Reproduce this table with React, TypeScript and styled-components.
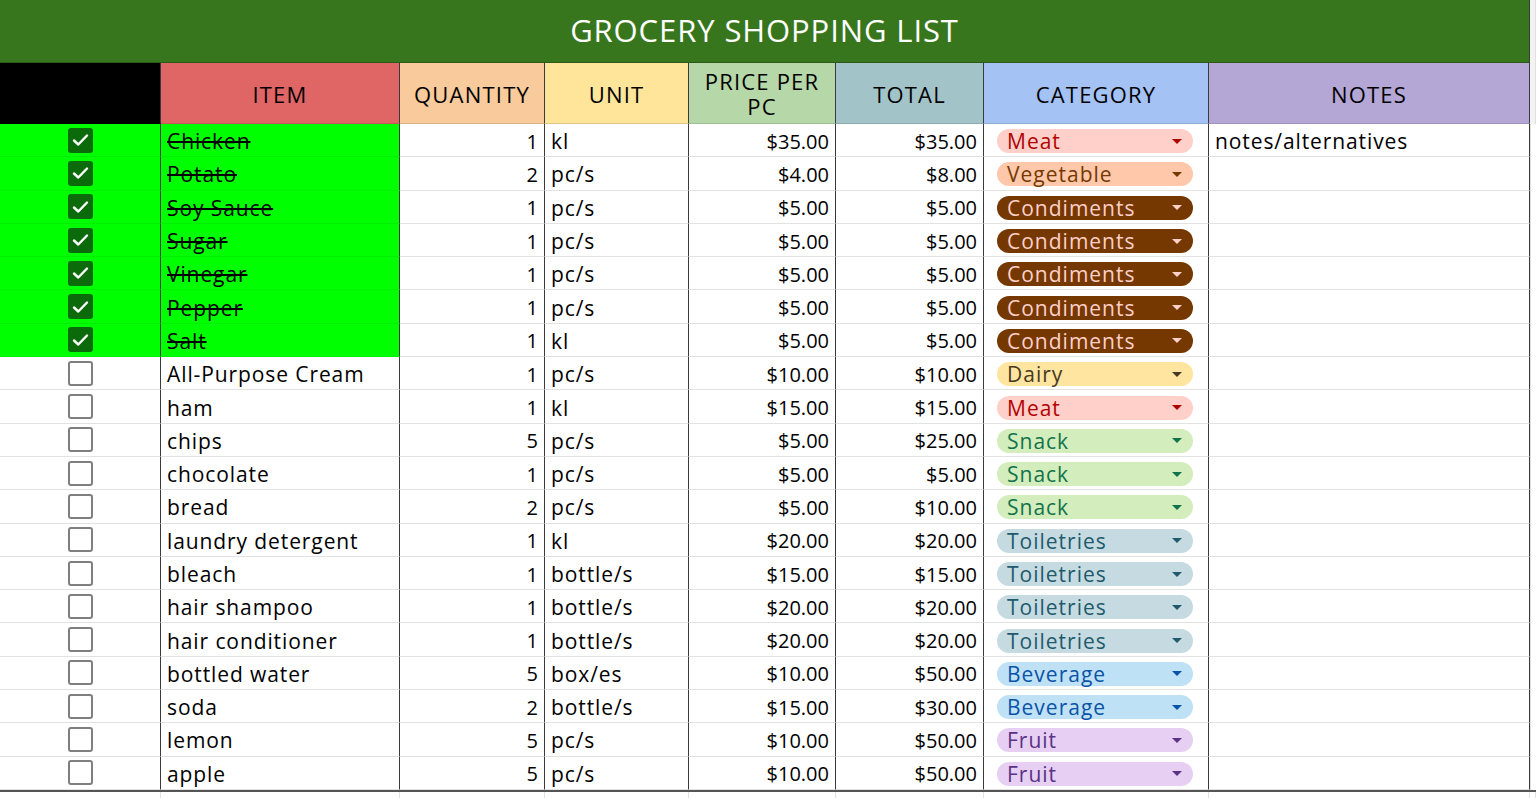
import React from "react";
import styled, { createGlobalStyle } from "styled-components";

const COLS = "161px 239px 145px 144px 147px 148px 225px 321px 6px";
const FONT = `"Open Sans", "Liberation Sans", sans-serif`;

const Global = createGlobalStyle`
  html, body { margin: 0; padding: 0; background: #ffffff; }
  body { font-family: ${FONT}; color: #000; overflow: hidden; }
`;

const Sheet = styled.div`
  width: 1536px;
  height: 798px;
  overflow: hidden;
  background: #fff;
`;

const TitleBar = styled.div`
  display: grid;
  grid-template-columns: 1530px 6px;
  height: 63px;
`;

const Title = styled.div`
  background: #38761d;
  color: #fff;
  font-size: 31px;
  display: flex;
  align-items: center;
  justify-content: center;
  border-right: 1px solid #3a3a3a;
  border-bottom: 1px solid #2d5a18;
  box-sizing: border-box;
  letter-spacing: 0.9px;
  padding-bottom: 3px;
`;

const Gutter = styled.div`
  background: #f3f3f3;
  border-right: 1px solid #e0e0e0;
`;

const HeaderRow = styled.div`
  display: grid;
  grid-template-columns: ${COLS};
  height: 61px;
`;

const HeadCell = styled.div<{ $bg: string }>`
  background: ${(p) => p.$bg};
  display: flex;
  align-items: center;
  justify-content: center;
  text-align: center;
  font-size: 22px;
  line-height: 25px;
  letter-spacing: 1.2px;
  padding-top: 2px;
  box-sizing: border-box;
  border-right: 1px solid #3a3a3a;
  border-bottom: 1px solid rgba(0, 0, 0, 0.12);
`;

const Body = styled.div`
  display: grid;
  grid-template-rows: repeat(20, 33.3px);
  border-bottom: 2px solid #555;
`;

const Row = styled.div`
  display: grid;
  grid-template-columns: ${COLS};
`;

const Cell = styled.div<{ $green?: boolean; $align?: "left" | "right" | "center"; $num?: boolean }>`
  background: ${(p) => (p.$green ? "#00ff00" : "#fff")};
  display: flex;
  align-items: center;
  justify-content: ${(p) =>
    p.$align === "right" ? "flex-end" : p.$align === "center" ? "center" : "flex-start"};
  padding: 2px 6px 0 6px;
  box-sizing: border-box;
  font-size: ${(p) => (p.$num ? "20px" : "21px")};
  letter-spacing: ${(p) => (p.$num ? "0" : "0.9px")};
  white-space: nowrap;
  overflow: hidden;
  border-right: 1px solid #3a3a3a;
  border-bottom: 1px solid ${(p) => (p.$green ? "rgba(0,0,0,0.06)" : "#e2e2e2")};
`;

const ItemText = styled.span<{ $done: boolean }>`
  text-decoration: ${(p) => (p.$done ? "line-through" : "none")};
`;

const GutterCell = styled.div`
  background: #fff;
  border-left: 1px solid #e0e0e0;
`;

const Box = styled.span<{ $on: boolean }>`
  width: 25px;
  height: 25px;
  box-sizing: border-box;
  border-radius: 3px;
  display: flex;
  align-items: center;
  justify-content: center;
  background: ${(p) => (p.$on ? "#0b6b0b" : "#fff")};
  border: ${(p) => (p.$on ? "none" : "2.5px solid #7f7f7f")};
  margin-top: -2px;
`;

const Pill = styled.div<{ $bg: string; $fg: string }>`
  width: 196px;
  height: 24px;
  margin-left: 7px;
  border-radius: 12px;
  background: ${(p) => p.$bg};
  color: ${(p) => p.$fg};
  display: flex;
  align-items: center;
  justify-content: space-between;
  padding: 0 11px 0 10px;
  box-sizing: border-box;
  font-size: 21px;
  letter-spacing: 1px;
`;

const Arrow = styled.span<{ $fg: string }>`
  width: 0;
  height: 0;
  border-left: 5px solid transparent;
  border-right: 5px solid transparent;
  border-top: 5px solid ${(p) => p.$fg};
`;

const Tail = styled.div`
  display: grid;
  grid-template-columns: ${COLS};
  height: 10px;
`;

const TailCell = styled.div`
  border-right: 1px solid #e2e2e2;
`;

type Cat = { bg: string; fg: string };
const CATS: Record<string, Cat> = {
  Meat: { bg: "#ffcfc9", fg: "#b10202" },
  Vegetable: { bg: "#ffc8aa", fg: "#753800" },
  Condiments: { bg: "#753800", fg: "#ffcfc9" },
  Dairy: { bg: "#ffe5a0", fg: "#473821" },
  Snack: { bg: "#d4edbc", fg: "#11734b" },
  Toiletries: { bg: "#c6dbe1", fg: "#215a6c" },
  Beverage: { bg: "#bfe1f6", fg: "#0a53a8" },
  Fruit: { bg: "#e6cff2", fg: "#5a3286" },
};

type Item = [boolean, string, number, string, string, string, string, string?];
const ROWS: Item[] = [
  [true, "Chicken", 1, "kl", "$35.00", "$35.00", "Meat", "notes/alternatives"],
  [true, "Potato", 2, "pc/s", "$4.00", "$8.00", "Vegetable"],
  [true, "Soy Sauce", 1, "pc/s", "$5.00", "$5.00", "Condiments"],
  [true, "Sugar", 1, "pc/s", "$5.00", "$5.00", "Condiments"],
  [true, "Vinegar", 1, "pc/s", "$5.00", "$5.00", "Condiments"],
  [true, "Pepper", 1, "pc/s", "$5.00", "$5.00", "Condiments"],
  [true, "Salt", 1, "kl", "$5.00", "$5.00", "Condiments"],
  [false, "All-Purpose Cream", 1, "pc/s", "$10.00", "$10.00", "Dairy"],
  [false, "ham", 1, "kl", "$15.00", "$15.00", "Meat"],
  [false, "chips", 5, "pc/s", "$5.00", "$25.00", "Snack"],
  [false, "chocolate", 1, "pc/s", "$5.00", "$5.00", "Snack"],
  [false, "bread", 2, "pc/s", "$5.00", "$10.00", "Snack"],
  [false, "laundry detergent", 1, "kl", "$20.00", "$20.00", "Toiletries"],
  [false, "bleach", 1, "bottle/s", "$15.00", "$15.00", "Toiletries"],
  [false, "hair shampoo", 1, "bottle/s", "$20.00", "$20.00", "Toiletries"],
  [false, "hair conditioner", 1, "bottle/s", "$20.00", "$20.00", "Toiletries"],
  [false, "bottled water", 5, "box/es", "$10.00", "$50.00", "Beverage"],
  [false, "soda", 2, "bottle/s", "$15.00", "$30.00", "Beverage"],
  [false, "lemon", 5, "pc/s", "$10.00", "$50.00", "Fruit"],
  [false, "apple", 5, "pc/s", "$10.00", "$50.00", "Fruit"],
];

const HEADERS: [string, string][] = [
  ["", "#000000"],
  ["ITEM", "#e06666"],
  ["QUANTITY", "#f9cb9c"],
  ["UNIT", "#ffe599"],
  ["PRICE PER PC", "#b6d7a8"],
  ["TOTAL", "#a2c4c9"],
  ["CATEGORY", "#a4c2f4"],
  ["NOTES", "#b4a7d6"],
];

const Check = () => (
  <svg width="17" height="14" viewBox="0 0 17 14">
    <path d="M2 7.5 L6.3 11.5 L15 2.5" fill="none" stroke="#fff" strokeWidth="2.4" strokeLinecap="round" strokeLinejoin="round" />
  </svg>
);

export default function App() {
  return (
    <Sheet>
      <Global />
      <TitleBar>
        <Title>GROCERY SHOPPING LIST</Title>
        <Gutter />
      </TitleBar>
      <HeaderRow>
        {HEADERS.map(([label, bg], i) => (
          <HeadCell key={i} $bg={bg}>
            {label === "PRICE PER PC" ? (
              <span>
                PRICE PER
                <br />
                PC
              </span>
            ) : (
              label
            )}
          </HeadCell>
        ))}
        <Gutter />
      </HeaderRow>
      <Body>
        {ROWS.map(([done, name, qty, unit, price, total, cat, note], i) => {
          const c = CATS[cat];
          return (
            <Row key={i}>
              <Cell $green={done} $align="center">
                <Box $on={done}>{done && <Check />}</Box>
              </Cell>
              <Cell $green={done}>
                <ItemText $done={done}>{name}</ItemText>
              </Cell>
              <Cell $align="right" $num>{qty}</Cell>
              <Cell>{unit}</Cell>
              <Cell $align="right" $num>{price}</Cell>
              <Cell $align="right" $num>{total}</Cell>
              <Cell>
                <Pill $bg={c.bg} $fg={c.fg}>
                  <span>{cat}</span>
                  <Arrow $fg={c.fg} />
                </Pill>
              </Cell>
              <Cell>{note ?? ""}</Cell>
              <GutterCell />
            </Row>
          );
        })}
      </Body>
      <Tail>
        {Array.from({ length: 9 }).map((_, i) => (
          <TailCell key={i} />
        ))}
      </Tail>
    </Sheet>
  );
}
